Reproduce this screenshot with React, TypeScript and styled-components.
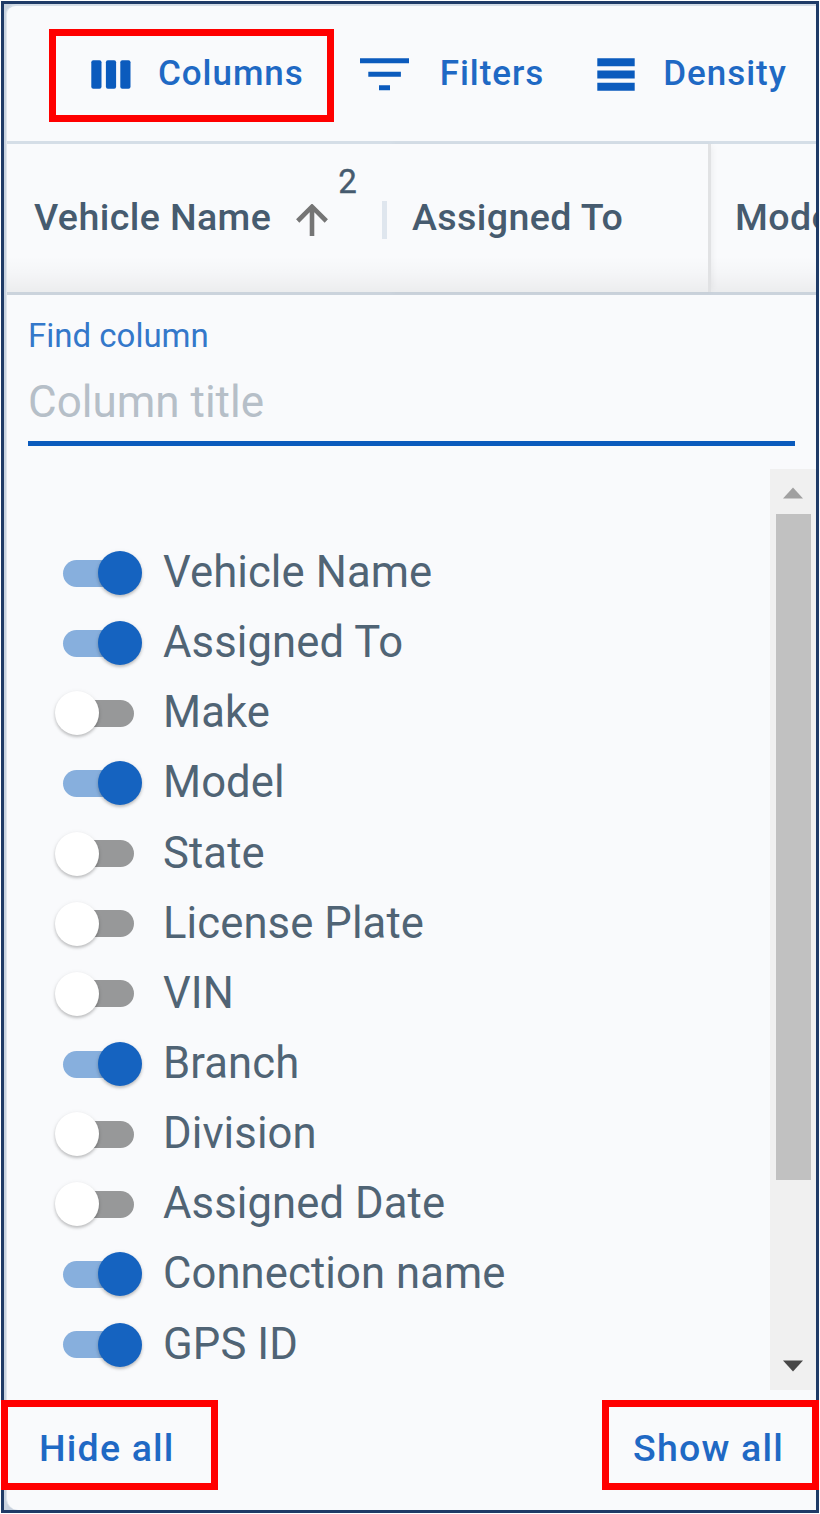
import React from "react";
import styled, { createGlobalStyle } from "styled-components";

const GlobalStyle = createGlobalStyle`
  *, *::before, *::after { box-sizing: border-box; }
  body { margin: 0; background: #ffffff; font-family: Roboto, "Liberation Sans", sans-serif; }
  button, input { font-family: inherit; }
`;

const Frame = styled.main`
  position: relative;
  width: 818px;
  height: 1512px;
  margin: 1px;
  border: 3px solid #1f3b67;
  background: #c9d3df;
  overflow: hidden;
`;

const Surface = styled.div`
  display: flex;
  flex-direction: column;
  height: 100%;
  margin-left: 2px;
  border-top: 2px solid #d3dce6;
  border-left: 1px solid #dfe5ec;
  border-radius: 10px 0 0 12px;
  background: #f9fafc;
  overflow: hidden;
`;

const Toolbar = styled.div`
  display: flex;
  align-items: center;
  height: 138px;
  padding: 0 0 0 84px;
  border-bottom: 3px solid #d5dee7;
  flex: none;
`;

const TextButton = styled.button<{ $size: number; $spacing: number; $gap?: number; $after?: number }>`
  display: flex;
  align-items: center;
  gap: ${(p) => p.$gap ?? 0}px;
  margin: 0 ${(p) => p.$after ?? 0}px 0 0;
  padding: 0;
  border: 0;
  background: none;
  color: #1f69c4;
  font-size: ${(p) => p.$size}px;
  font-weight: 500;
  line-height: 44px;
  letter-spacing: ${(p) => p.$spacing}px;
  white-space: nowrap;

  svg { flex: none; margin-top: 1px; fill: #0b5bbd; }
`;

const HeaderRow = styled.div`
  display: flex;
  flex: none;
  height: 151px;
  border-bottom: 3px solid #cbd3dc;
  background: linear-gradient(to bottom, rgba(0, 0, 0, 0) 76%, rgba(0, 0, 0, 0.02) 88%, rgba(0, 0, 0, 0.055) 100%);
  color: #465b6f;
  font-size: 37.6px;
  font-weight: 500;
  line-height: 44px;
  white-space: nowrap;
`;

const HeaderCell = styled.div<{ $width: number; $pad: number; $edge?: boolean }>`
  display: flex;
  align-items: center;
  flex: none;
  width: ${(p) => p.$width}px;
  padding-left: ${(p) => p.$pad}px;
  border-right: ${(p) => (p.$edge ? "3px solid #e1e2e4" : "0")};
  box-shadow: ${(p) => (p.$edge ? "3px 0 7px -2px rgba(0,0,0,.06)" : "none")};
`;

const HeaderTitle = styled.span`
  margin-top: -2px;
  letter-spacing: 0.4px;
`;

const SortArrow = styled.svg`
  margin: 4px 0 0 25px;
  flex: none;
`;

const SortOrder = styled.sup`
  align-self: flex-start;
  margin: 16px 0 0 10px;
  font-size: 33px;
  font-weight: 400;
  -webkit-text-stroke: 0.4px #465b6f;
`;

const Separator = styled.i`
  width: 5px;
  height: 38px;
  margin: 4px 0 0 auto;
  background: #dfe6ee;
`;

const Field = styled.label`
  display: block;
  flex: none;
  width: 767px;
  height: 174px;
  margin-left: 21px;
  padding-top: 21px;
`;

const FieldLabel = styled.span`
  display: block;
  color: #3478ca;
  font-size: 33px;
  line-height: 40px;
`;

const FieldInput = styled.input`
  display: block;
  width: 100%;
  height: 90px;
  padding: 6px 0 0;
  border: 0;
  border-bottom: 5px solid #0b5bbd;
  outline: 0;
  background: none;
  font-size: 44px;

  &::placeholder { color: #b6bfc8; opacity: 1; }
`;

const ListArea = styled.div`
  display: flex;
  flex: none;
  height: 921px;
`;

const Options = styled.div`
  flex: 1;
  padding: 69px 0 0 48px;
  overflow: hidden;
`;

const Option = styled.div`
  display: flex;
  align-items: center;
  height: 70.15px;
  color: #506475;
  font-size: 43.6px;
  line-height: 52px;
  letter-spacing: 0.1px;
  white-space: nowrap;
`;

const Track = styled.span<{ $on: boolean }>`
  display: flex;
  align-items: center;
  justify-content: ${(p) => (p.$on ? "flex-end" : "flex-start")};
  width: 71px;
  height: 27px;
  margin: 0 29px 0 8px;
  border-radius: 14px;
  background: ${(p) => (p.$on ? "#87afdd" : "#979899")};
`;

const Thumb = styled.span<{ $on: boolean }>`
  flex: none;
  width: 44px;
  height: 44px;
  margin: 0 -8px;
  border-radius: 50%;
  background: ${(p) => (p.$on ? "#1563c0" : "#ffffff")};
  box-shadow: 0 2px 3px rgba(0, 0, 0, 0.2), 0 1px 5px rgba(0, 0, 0, 0.08);
`;

const ScrollRail = styled.div`
  display: flex;
  flex-direction: column;
  align-items: center;
  width: 46px;
  padding: 18px 0;
  background: #f0f0f0;
`;

const ScrollThumb = styled.div`
  width: 35px;
  height: 666px;
  margin: 15px 0 auto;
  background: #c1c1c1;
`;

const Footer = styled.div`
  display: flex;
  flex: 1;
  align-items: center;
  justify-content: space-between;
  padding: 0 32px 4px 32px;
`;

const Callout = styled.div<{ $x: number; $y: number; $w: number; $h: number }>`
  position: absolute;
  left: ${(p) => p.$x}px;
  top: ${(p) => p.$y}px;
  width: ${(p) => p.$w}px;
  height: ${(p) => p.$h}px;
  border: 7px solid #ff0000;
  pointer-events: none;
`;

const Outer = styled.div`
  position: relative;
  width: 820px;
  height: 1514px;
  overflow: hidden;
`;

const options = [
  { name: "Vehicle Name", on: true },
  { name: "Assigned To", on: true },
  { name: "Make", on: false },
  { name: "Model", on: true },
  { name: "State", on: false },
  { name: "License Plate", on: false },
  { name: "VIN", on: false },
  { name: "Branch", on: true },
  { name: "Division", on: false },
  { name: "Assigned Date", on: false },
  { name: "Connection name", on: true },
  { name: "GPS ID", on: true },
];

export default function App() {
  return (
    <>
      <GlobalStyle />
      <Outer>
        <Frame>
          <Surface>
            <Toolbar>
              <TextButton $size={35} $spacing={0.95} $gap={27} $after={56}>
                <svg width="40" height="29" viewBox="0 0 40 29">
                  <rect x="0.3" y="0.3" width="10.2" height="28.4" rx="2" />
                  <rect x="14.9" y="0.3" width="10.2" height="28.4" rx="2" />
                  <rect x="29.3" y="0.3" width="10.2" height="28.4" rx="2" />
                </svg>
                Columns
              </TextButton>
              <TextButton $size={35} $spacing={0.95} $gap={31} $after={53}>
                <svg width="49" height="33" viewBox="0 0 49 33">
                  <path d="M0 0.3h49v5H0zM8.3 13.8h32.6v5H8.3zM19 27.3h11v5H19z" />
                </svg>
                Filters
              </TextButton>
              <TextButton $size={35} $spacing={0.95} $gap={28}>
                <svg width="38" height="33" viewBox="0 0 38 33">
                  <path d="M0.3 0.3h37.4v8H0.3zM0.3 12.5h37.4v8H0.3zM0.3 24.8h37.4v8H0.3z" />
                </svg>
                Density
              </TextButton>
            </Toolbar>
            <HeaderRow>
              <HeaderCell $width={380} $pad={27}>
                <HeaderTitle>Vehicle Name</HeaderTitle>
                <SortArrow width="32" height="33" viewBox="0 0 32 33">
                  <path d="M16 32V3M1.7 17L16 2.7L30.3 17" fill="none" stroke="#757575" strokeWidth="4.6" />
                </SortArrow>
                <SortOrder>2</SortOrder>
                <Separator />
              </HeaderCell>
              <HeaderCell $width={324} $pad={25} $edge>
                <HeaderTitle>Assigned To</HeaderTitle>
              </HeaderCell>
              <HeaderCell $width={200} $pad={24}>
                <HeaderTitle>Model</HeaderTitle>
              </HeaderCell>
            </HeaderRow>
            <Field>
              <FieldLabel>Find column</FieldLabel>
              <FieldInput placeholder="Column title" />
            </Field>
            <ListArea>
              <Options>
                {options.map((o) => (
                  <Option key={o.name}>
                    <Track $on={o.on}>
                      <Thumb $on={o.on} />
                    </Track>
                    <span>{o.name}</span>
                  </Option>
                ))}
              </Options>
              <ScrollRail>
                <svg width="20" height="12" viewBox="0 0 20 12">
                  <path d="M0 11.5L10 0.5L20 11.5z" fill="#a0a0a0" />
                </svg>
                <ScrollThumb />
                <svg width="20" height="12" viewBox="0 0 20 12">
                  <path d="M0 0.5L10 11.5L20 0.5z" fill="#484848" />
                </svg>
              </ScrollRail>
            </ListArea>
            <Footer>
              <TextButton $size={37.5} $spacing={1.2}>Hide all</TextButton>
              <TextButton $size={37.5} $spacing={1.2}>Show all</TextButton>
            </Footer>
          </Surface>
        </Frame>
        <Callout $x={49} $y={29} $w={285} $h={93} />
        <Callout $x={1} $y={1400} $w={217} $h={90} />
        <Callout $x={602} $y={1400} $w={217} $h={90} />
      </Outer>
    </>
  );
}
